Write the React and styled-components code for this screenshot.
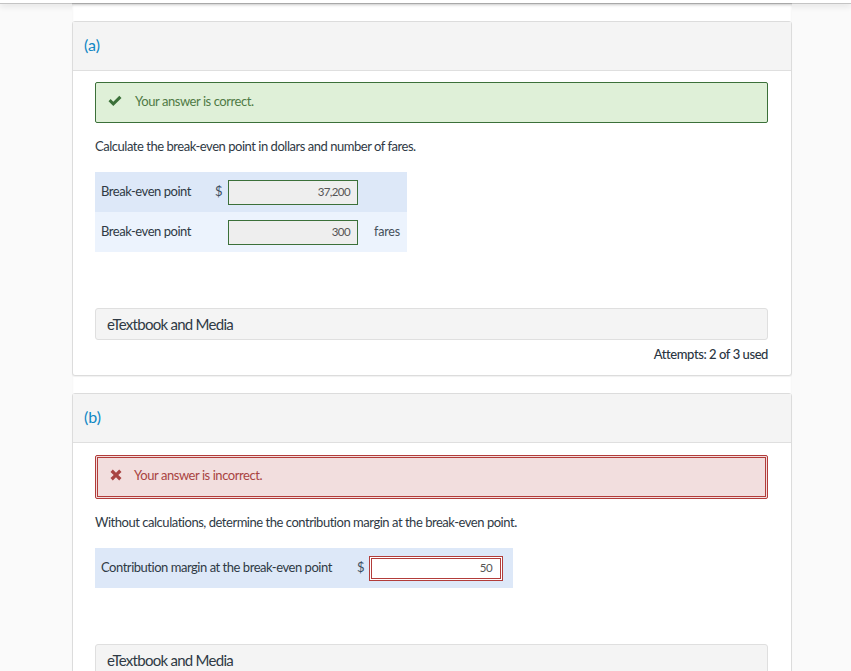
import React from 'react';
import styled, { createGlobalStyle } from 'styled-components';

const GlobalStyle = createGlobalStyle`
    html, body {
        margin: 0;
        padding: 0;
        height: 100%;
        overflow: hidden;
        background-color: #fafafa;
    }
    body {
        font-family: Lato, 'Liberation Sans', sans-serif;
        font-size: 13px;
        color: #2f3a45;
    }
`;

function Check() {
    return (
        <svg width="14" height="12" viewBox="0 0 14 12">
            <path d="M0.5 6.2 L2.6 4.1 L5.3 6.7 L11.3 0.8 L13.5 2.9 L5.3 11 Z" fill="#3b7039" />
        </svg>
    );
}

function Cross() {
    return (
        <svg width="12" height="12" viewBox="0 0 12 12">
            <path d="M2.8 0.6 L6 3.7 L9.2 0.6 L11.5 2.9 L8.3 6 L11.5 9.1 L9.2 11.4 L6 8.3 L2.8 11.4 L0.5 9.1 L3.7 6 L0.5 2.9 Z" fill="#a94442" />
        </svg>
    );
}

export default function App() {
    return (
        <Page>
            <GlobalStyle />
            <TopBar />
            <Column>
                <Card>
                    <CardHeader>(a)</CardHeader>
                    <CardBody>
                        <Alert kind="correct">
                            <IconSlot kind="correct"><Check /></IconSlot>
                            Your answer is correct.
                        </Alert>
                        <Question>Calculate the break-even point in dollars and number of fares.</Question>
                        <AnswerTable>
                            <AnswerRow shade="dark">
                                <RowLabel width={114}>Break-even point</RowLabel>
                                <Dollar width={13}>$</Dollar>
                                <ValueBox>37,200</ValueBox>
                                <Unit width={49} />
                            </AnswerRow>
                            <AnswerRow shade="light">
                                <RowLabel width={114}>Break-even point</RowLabel>
                                <Dollar width={13} />
                                <ValueBox>300</ValueBox>
                                <Unit width={49}>fares</Unit>
                            </AnswerRow>
                        </AnswerTable>
                        <MediaBar>eTextbook and Media</MediaBar>
                        <Attempts>Attempts: 2 of 3 used</Attempts>
                    </CardBody>
                </Card>
                <Card>
                    <CardHeader>(b)</CardHeader>
                    <CardBody>
                        <Alert kind="incorrect">
                            <IconSlot kind="incorrect"><Cross /></IconSlot>
                            Your answer is incorrect.
                        </Alert>
                        <Question>Without calculations, determine the contribution margin at the break-even point.</Question>
                        <AnswerTable>
                            <AnswerRow shade="dark">
                                <RowLabel width={256}>Contribution margin at the break-even point</RowLabel>
                                <Dollar width={12}>$</Dollar>
                                <WrongBox>50</WrongBox>
                                <Unit width={10} />
                            </AnswerRow>
                        </AnswerTable>
                        <MediaBar>eTextbook and Media</MediaBar>
                    </CardBody>
                </Card>
            </Column>
        </Page>
    );
}

const Page = styled.div`
    height: 671px;
    overflow: hidden;
    background-color: #fafafa;
`;

const TopBar = styled.div`
    height: 3px;
    background-color: #ffffff;
    border-bottom: 1px solid #c4c4c4;
    margin-bottom: -1px;
    box-shadow: 0 2px 6px rgba(0, 0, 0, 0.12);
`;

const Column = styled.div`
    box-sizing: border-box;
    width: 720px;
    margin-left: 72px;
    padding-top: 17px;
    background-color: #ffffff;
    border-top: 1px solid #a8a8a8;
    box-shadow: inset 0 2px 3px -1px rgba(0, 0, 0, 0.22);
    display: flex;
    flex-direction: column;
    gap: 17px;
    position: relative;
`;

const Card = styled.section`
    box-sizing: border-box;
    border: 1px solid #dcdcdc;
    border-radius: 3px;
    background-color: #ffffff;
    box-shadow: 0 1px 1px rgba(0, 0, 0, 0.06);
`;

const CardHeader = styled.div`
    box-sizing: border-box;
    height: 49px;
    padding: 0 0 4px 11px;
    display: flex;
    align-items: center;
    background-color: #f4f4f4;
    border-bottom: 1px solid #dfdfdf;
    font-size: 16px;
    color: #0f87c4;
`;

const CardBody = styled.div`
    padding: 11px 23px 0 22px;
`;

const Alert = styled.div`
    box-sizing: border-box;
    height: ${props => props.kind === "correct" ? "41px" : "44px"};
    display: flex;
    align-items: center;
    padding: 0 0 4px 12px;
    margin-top: ${props => props.kind === "correct" ? "0" : "1px"};
    border-radius: 2px;
    font-size: 13px;
    letter-spacing: -0.44px;
    background-color: ${props => props.kind === "correct" ? "#dff0d8" : "#f2dede"};
    color: ${props => props.kind === "correct" ? "#4f7a45" : "#a94442"};
    border: ${props => props.kind === "correct" ? "1px solid #3b7039" : "3px double #b23c3a"};
`;

const IconSlot = styled.span`
    display: flex;
    align-items: center;
    width: ${props => props.kind === "correct" ? "27px" : "24px"};
`;

const Question = styled.p`
    margin: 15px 0 18px 0;
    line-height: 16px;
    font-size: 13px;
    letter-spacing: -0.47px;
`;

const AnswerTable = styled.div`
    display: inline-flex;
    flex-direction: column;
    vertical-align: top;
`;

const AnswerRow = styled.div`
    height: 40px;
    display: flex;
    align-items: center;
    padding-left: 6px;
    background-color: ${props => props.shade === "dark" ? "#dde8f8" : "#ecf3fd"};
`;

const RowLabel = styled.span`
    width: ${props => props.width}px;
    padding-bottom: 2px;
    font-size: 13px;
    letter-spacing: -0.47px;
`;

const Dollar = styled.span`
    width: ${props => props.width}px;
    padding-bottom: 3px;
    font-size: 13px;
    color: #3d4f60;
`;

const ValueBox = styled.div`
    box-sizing: border-box;
    width: 130px;
    height: 25px;
    padding: 0 7px 1px 0;
    display: flex;
    align-items: center;
    justify-content: flex-end;
    background-color: #eeeeee;
    border: 1px solid #3b7039;
    font-size: 11.5px;
    letter-spacing: -0.6px;
    color: #555555;
`;

const WrongBox = styled.div`
    box-sizing: border-box;
    width: 134px;
    height: 25px;
    padding: 0 8px 1px 0;
    display: flex;
    align-items: center;
    justify-content: flex-end;
    background-color: #ffffff;
    border: 3px double #b23c3a;
    font-size: 11.5px;
    letter-spacing: -0.6px;
    color: #555555;
`;

const Unit = styled.span`
    width: ${props => props.width}px;
    box-sizing: border-box;
    padding: 0 0 2px ${props => props.width > 10 ? 16 : 0}px;
    font-size: 12.5px;
    letter-spacing: -0.2px;
    color: #444f5a;
`;

const MediaBar = styled.div`
    box-sizing: border-box;
    height: 32px;
    margin-top: 56px;
    padding: 0 0 1px 11px;
    display: flex;
    align-items: center;
    background-color: #f4f4f4;
    border: 1px solid #dfdfdf;
    border-radius: 3px;
    font-size: 15px;
    letter-spacing: -0.73px;
    color: #2f3a45;
`;

const Attempts = styled.div`
    height: 35px;
    padding-top: 6px;
    box-sizing: border-box;
    text-align: right;
    font-size: 13px;
    font-weight: 500;
    letter-spacing: -0.43px;
    color: #2a3542;
`;
